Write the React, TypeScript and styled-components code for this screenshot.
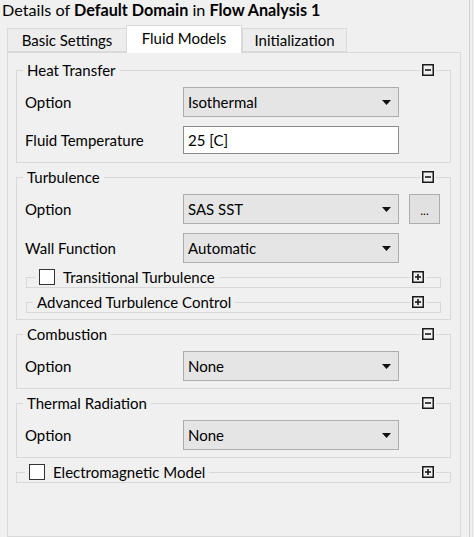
import React from "react";
import styled, { createGlobalStyle } from "styled-components";

const Global = createGlobalStyle`
  html, body { margin: 0; padding: 0; background: #f0f0f0; }
  body { font-family: Lato, "Liberation Sans", sans-serif; font-size: 15px; color: #000; }
  * { box-sizing: border-box; }
`;

const Page = styled.div`
  width: 474px;
  height: 537px;
  display: flex;
  overflow: hidden;
  background: #f0f0f0;
`;

const Main = styled.div`
  flex: 0 0 461px;
  display: flex;
  flex-direction: column;
`;

const Edge = styled.div`
  flex: 1;
  display: flex;
`;

const EdgeLine = styled.div`
  margin-left: 8px;
  width: 4px;
  border-left: 1px solid #d2d2d2;
  border-right: 1px solid #e2e2e2;
`;

const Title = styled.div`
  height: 25px;
  padding-left: 2px;
  font-size: 16.2px;
  line-height: 19px;
  white-space: nowrap;
  b { font-weight: 700; }
`;

const TabBar = styled.div`
  display: flex;
  align-items: flex-end;
  height: 27px;
  padding-left: 7px;
`;

const Tab = styled.div<{ $active?: boolean; $w: number }>`
  width: ${(p) => p.$w}px;
  height: ${(p) => (p.$active ? 28 : 24)}px;
  margin-bottom: ${(p) => (p.$active ? -1 : 0)}px;
  display: flex;
  align-items: center;
  justify-content: center;
  background: ${(p) => (p.$active ? "#ffffff" : "#ededed")};
  border: 1px solid #d9d9d9;
  border-bottom: ${(p) => (p.$active ? "none" : "1px solid #d9d9d9")};
  padding-bottom: ${(p) => (p.$active ? 3 : 1)}px;
  position: relative;
  z-index: ${(p) => (p.$active ? 2 : 1)};
  margin-left: ${(p) => (p.$active ? -1 : 0)}px;
  white-space: nowrap;
`;

const Panel = styled.div`
  margin-left: 7px;
  width: 454px;
  flex: 1;
  border: 1px solid #d9d9d9;
  background: #f0f0f0;
  padding: 17px 9px 0 8px;
  display: flex;
  flex-direction: column;
  gap: 14px;
`;

const GroupBox = styled.div<{ $sub?: boolean }>`
  border: 1px solid #d8d8d8;
  margin: ${(p) => (p.$sub ? "5px 9px 0 1px" : "0")};
`;

const GroupHead = styled.div`
  display: flex;
  align-items: center;
  height: 16px;
  margin-top: -9px;
`;

const HeadTitle = styled.div<{ $indent: number }>`
  display: flex;
  align-items: center;
  gap: 8px;
  margin-left: ${(p) => p.$indent}px;
  padding: 0 4px;
  background: #f0f0f0;
  line-height: 16px;
  white-space: nowrap;
`;

const HeadSpacer = styled.div`
  flex: 1;
`;

const ToggleWrap = styled.div`
  display: flex;
  padding: 0 2px;
  margin-right: 14px;
  background: #f0f0f0;
`;

const Body = styled.div<{ $pb: number }>`
  display: flex;
  flex-direction: column;
  gap: 9px;
  padding: 9px 0 ${(p) => p.$pb}px 8px;
`;

const CollapsedBody = styled.div`
  height: 2px;
`;

const Row = styled.div`
  display: flex;
  align-items: center;
`;

const Label = styled.div`
  width: 158px;
  white-space: nowrap;
`;

const Select = styled.div`
  width: 216px;
  height: 30px;
  display: flex;
  align-items: center;
  justify-content: space-between;
  background: #e5e5e5;
  border: 1px solid #adadad;
  padding: 0 7px 0 4px;
`;

const TextField = styled.input`
  width: 216px;
  height: 28px;
  border: 1px solid #8c8c8c;
  background: #fff;
  padding: 0 4px;
  font: inherit;
  color: #000;
  outline: none;
`;

const DotsButton = styled.div`
  width: 31px;
  height: 30px;
  margin-left: 10px;
  border: 1px solid #adadad;
  background: #e1e1e1;
  display: flex;
  align-items: center;
  justify-content: center;
  font-size: 12px;
  padding-top: 3px;
`;

const Check = styled.div`
  width: 16px;
  height: 16px;
  border: 1px solid #333;
  background: #fff;
  flex: 0 0 16px;
`;

const Arrow = () => (
  <svg width="9" height="5" viewBox="0 0 9 5">
    <path d="M0 0H9L4.5 5Z" fill="#111" />
  </svg>
);

const ToggleIcon = ({ plus }: { plus?: boolean }) => (
  <svg width="12" height="12" viewBox="0 0 12 12">
    <rect x="0.75" y="0.75" width="10.5" height="10.5" fill="#f0f0f0" stroke="#1a1a1a" strokeWidth="1.5" />
    <path d="M3 6H9" stroke="#1a1a1a" strokeWidth="1.6" />
    {plus && <path d="M6 3V9" stroke="#1a1a1a" strokeWidth="1.6" />}
  </svg>
);

type GroupProps = {
  title: React.ReactNode;
  check?: boolean;
  plus?: boolean;
  sub?: boolean;
  pb?: number;
  indent?: number;
  children?: React.ReactNode;
};

const Group = ({ title, check, plus, sub, pb = 7, indent, children }: GroupProps) => (
  <GroupBox $sub={sub}>
    <GroupHead>
      <HeadTitle $indent={indent ?? (check ? 8 : 6)}>
        {check && <Check />}
        <span>{title}</span>
      </HeadTitle>
      <HeadSpacer />
      <ToggleWrap>
        <ToggleIcon plus={plus} />
      </ToggleWrap>
    </GroupHead>
    {children ? <Body $pb={pb}>{children}</Body> : <CollapsedBody />}
  </GroupBox>
);

const SelectField = ({ value }: { value: string }) => (
  <Select>
    <span>{value}</span>
    <Arrow />
  </Select>
);

export default function App() {
  return (
    <Page>
      <Global />
      <Main>
        <Title>
          Details of <b>Default Domain</b> in <b>Flow Analysis 1</b>
        </Title>
        <TabBar>
          <Tab $w={120}>Basic Settings</Tab>
          <Tab $w={116} $active>Fluid Models</Tab>
          <Tab $w={105}>Initialization</Tab>
        </TabBar>
        <Panel>
          <Group title="Heat Transfer" pb={8}>
            <Row>
              <Label>Option</Label>
              <SelectField value="Isothermal" />
            </Row>
            <Row>
              <Label>Fluid Temperature</Label>
              <TextField value="25 [C]" readOnly />
            </Row>
          </Group>
          <Group title="Turbulence" pb={6}>
            <Row>
              <Label>Option</Label>
              <SelectField value="SAS SST" />
              <DotsButton>...</DotsButton>
            </Row>
            <Row>
              <Label>Wall Function</Label>
              <SelectField value="Automatic" />
            </Row>
            <Group title="Transitional Turbulence" check plus sub />
            <Group title="Advanced Turbulence Control" plus sub />
          </Group>
          <Group title="Combustion">
            <Row>
              <Label>Option</Label>
              <SelectField value="None" />
            </Row>
          </Group>
          <Group title="Thermal Radiation">
            <Row>
              <Label>Option</Label>
              <SelectField value="None" />
            </Row>
          </Group>
          <Group title="Electromagnetic Model" check plus />
        </Panel>
      </Main>
      <Edge>
        <EdgeLine />
      </Edge>
    </Page>
  );
}
